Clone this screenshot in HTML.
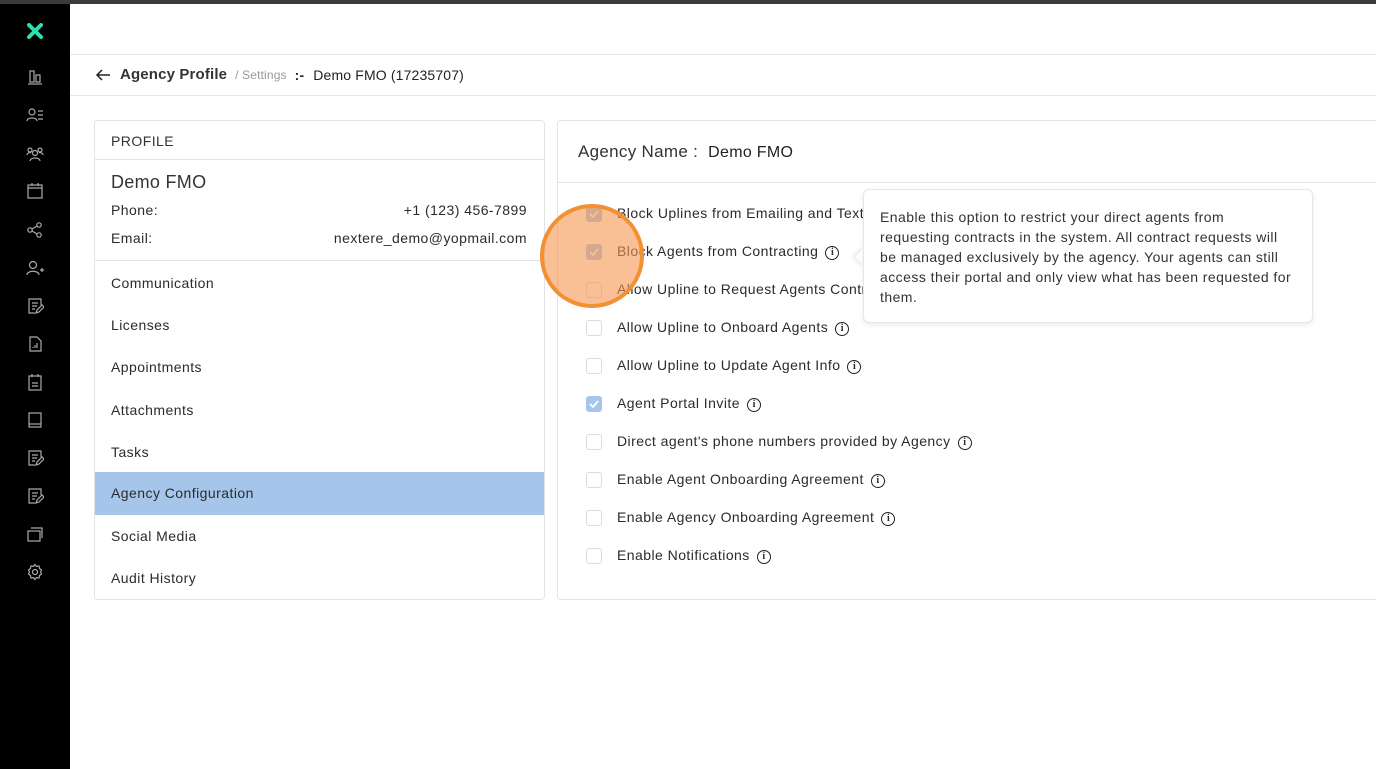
<!DOCTYPE html>
<html><head><style>
*{box-sizing:border-box;margin:0;padding:0}
body{width:1376px;height:769px;background:#fff;font-family:"Liberation Sans",sans-serif;position:relative;overflow:hidden;color:#2b2b2b}
.topbar{position:absolute;left:0;top:0;width:1376px;height:4px;background:#3a3a3a}
.side{position:absolute;left:0;top:4px;width:70px;height:765px;background:#000}
.ic{position:absolute;left:26px;width:18px;height:18px}
.hdr1{position:absolute;left:70px;top:54px;right:0;border-top:1px solid #e6e6e6}
.hdr2{position:absolute;left:70px;top:95px;right:0;border-top:1px solid #e6e6e6}
.bc{position:absolute;left:95px;top:66px;font-size:14px;display:flex;align-items:center;letter-spacing:.15px}
.card{position:absolute;border:1px solid #e3e3e3;border-radius:4px;background:#fff}
.t{position:absolute;font-size:14px;white-space:nowrap;letter-spacing:.45px}
.r{position:absolute;font-size:14px;white-space:nowrap;letter-spacing:.45px;right:849px;text-align:right}
.cb{position:absolute;left:586px;width:16px;height:16px;border:1px solid #dcdcdc;border-radius:3px;background:#fff}
.cb.on{background:#a5c5ea;border-color:#a5c5ea}
.info{display:inline-block;width:14px;height:14px;border:1.4px solid #222;border-radius:50%;font-size:10px;line-height:11px;text-align:center;font-weight:bold;vertical-align:1px;margin-left:7px;font-family:"Liberation Serif",serif;letter-spacing:0}
</style></head><body>
<div class="topbar"></div>
<div class="side">
<svg style="position:absolute;left:27px;top:19px" width="16" height="16" viewBox="0 0 16 16"><path d="M2 2L14 14M14 2L2 14" stroke="#2ee0b0" stroke-width="4" stroke-linecap="round"/></svg>
<svg class="ic" style="top:64px" viewBox="0 0 18 18" fill="none" stroke="#aaa" stroke-width="1.2"><rect x="4" y="3" width="4" height="11"/><rect x="10" y="7" width="4" height="7"/><path d="M2 16h14"/></svg>
<svg class="ic" style="top:102px" viewBox="0 0 18 18" fill="none" stroke="#aaa" stroke-width="1.2"><circle cx="6" cy="6" r="3"/><path d="M1 15c0-4 10-4 10 0M12 5h5M12 9h5M12 13h5"/></svg>
<svg class="ic" style="top:141px" viewBox="0 0 18 18" fill="none" stroke="#aaa" stroke-width="1.2"><circle cx="9" cy="8" r="2.5"/><circle cx="4" cy="5" r="2"/><circle cx="14" cy="5" r="2"/><path d="M4 16c0-4 10-4 10 0M1 10c0-2 3-3 4-2M17 10c0-2-3-3-4-2"/></svg>
<svg class="ic" style="top:178px" viewBox="0 0 18 18" fill="none" stroke="#aaa" stroke-width="1.2"><rect x="2" y="3" width="14" height="13"/><path d="M2 6h14M6 1v3M12 1v3"/></svg>
<svg class="ic" style="top:217px" viewBox="0 0 18 18" fill="none" stroke="#aaa" stroke-width="1.2"><circle cx="4" cy="9" r="2.2"/><circle cx="13" cy="4" r="2.2"/><circle cx="13" cy="14" r="2.2"/><path d="M6 8l5-3M6 10l5 3"/></svg>
<svg class="ic" style="top:255px" viewBox="0 0 18 18" fill="none" stroke="#aaa" stroke-width="1.2"><circle cx="7" cy="6" r="3.5"/><path d="M1 16c0-5 12-5 12 0M14 11h4M16 9v4"/></svg>
<svg class="ic" style="top:293px" viewBox="0 0 18 18" fill="none" stroke="#aaa" stroke-width="1.2"><path d="M15 8V2H3v14h6M6 6h6M6 9h5M6 12h3M10 16l1-3 5-5 2 2-5 5z"/></svg>
<svg class="ic" style="top:331px" viewBox="0 0 18 18" fill="none" stroke="#aaa" stroke-width="1.2"><path d="M4 2h7l4 4v10H4zM7 13v-1M9 13v-3M11 13v-5"/></svg>
<svg class="ic" style="top:369px" viewBox="0 0 18 18" fill="none" stroke="#aaa" stroke-width="1.2"><rect x="3" y="3" width="12" height="14"/><path d="M6 1v3M12 1v3M6 10h6M6 13h6"/></svg>
<svg class="ic" style="top:407px" viewBox="0 0 18 18" fill="none" stroke="#aaa" stroke-width="1.2"><rect x="3" y="2" width="12" height="14"/><path d="M3 13h12"/></svg>
<svg class="ic" style="top:445px" viewBox="0 0 18 18" fill="none" stroke="#aaa" stroke-width="1.2"><path d="M15 8V2H3v14h6M6 6h6M6 9h5M6 12h3M10 16l1-3 5-5 2 2-5 5z"/></svg>
<svg class="ic" style="top:483px" viewBox="0 0 18 18" fill="none" stroke="#aaa" stroke-width="1.2"><path d="M15 8V2H3v14h6M6 6h6M6 9h5M6 12h3M10 16l1-3 5-5 2 2-5 5z"/></svg>
<svg class="ic" style="top:521px" viewBox="0 0 18 18" fill="none" stroke="#aaa" stroke-width="1.2"><rect x="2" y="6" width="12" height="10"/><path d="M5 3h11v10"/></svg>
<svg class="ic" style="top:559px" viewBox="0 0 18 18" fill="none" stroke="#aaa" stroke-width="1.2"><circle cx="9" cy="9" r="2.5"/><path d="M9 1.5l1.5 2 2.5-.5.5 2.5 2 1.5-1 2 1 2-2 1.5-.5 2.5-2.5-.5L9 16.5l-1.5-2-2.5.5-.5-2.5-2-1.5 1-2-1-2 2-1.5.5-2.5 2.5.5z"/></svg>
</div>
<div class="hdr1"></div><div class="hdr2"></div>
<div class="bc"><svg width="16" height="14" viewBox="0 0 16 14" fill="none" stroke="#222" stroke-width="1.5"><path d="M15 7H2M7 2L2 7l5 5"/></svg>
<b style="margin-left:9px;font-size:15px;color:#333">Agency Profile</b><span style="margin-left:8px;font-size:12px;color:#999">/ Settings</span><b style="margin-left:8px">:-</b><span style="margin-left:9px;color:#222">Demo FMO (17235707)</span></div>

<div class="card" style="left:94px;top:120px;width:451px;height:480px">
<div style="position:absolute;left:0;right:0;top:38px;border-top:1px solid #e3e3e3"></div>
<div style="position:absolute;left:0;right:0;top:139px;border-top:1px solid #e3e3e3"></div>
<div style="position:absolute;left:0;right:0;top:351px;height:43px;background:#a5c5ea"></div>
</div>
<div class="t" style="left:111px;top:133px;color:#333">PROFILE</div>
<div class="t" style="left:111px;top:172px;font-size:18px;color:#333;letter-spacing:.3px">Demo FMO</div>
<div class="t" style="left:111px;top:202px">Phone:</div>
<div class="r" style="top:202px">+1 (123) 456-7899</div>
<div class="t" style="left:111px;top:230px">Email:</div>
<div class="r" style="top:230px">nextere_demo@yopmail.com</div>
<div class="t" style="left:111px;top:275px">Communication</div>
<div class="t" style="left:111px;top:317px">Licenses</div>
<div class="t" style="left:111px;top:359px">Appointments</div>
<div class="t" style="left:111px;top:402px">Attachments</div>
<div class="t" style="left:111px;top:444px">Tasks</div>
<div class="t" style="left:111px;top:485px">Agency Configuration</div>
<div class="t" style="left:111px;top:528px">Social Media</div>
<div class="t" style="left:111px;top:570px">Audit History</div>

<div class="card" style="left:557px;top:120px;width:830px;height:480px">
<div style="position:absolute;left:0;right:0;top:61px;border-top:1px solid #e3e3e3"></div></div>
<div class="t" style="left:578px;top:142px;font-size:17px;color:#333;letter-spacing:.3px">Agency Name :&nbsp; <span style="font-size:16px;color:#222">Demo FMO</span></div>

<div class="cb on" style="top:206px"><svg width="14" height="14" viewBox="0 0 14 14"><path d="M3 7l3 3 5-6" stroke="#fff" stroke-width="1.8" fill="none"/></svg></div><div class="t" style="left:617px;top:205px">Block Uplines from Emailing and Texting</div>
<div class="cb on" style="top:244px"><svg width="14" height="14" viewBox="0 0 14 14"><path d="M3 7l3 3 5-6" stroke="#fff" stroke-width="1.8" fill="none"/></svg></div><div class="t" style="left:617px;top:243px">Block Agents from Contracting<span class="info">i</span></div>
<div class="cb" style="top:282px"></div><div class="t" style="left:617px;top:281px">Allow Upline to Request Agents Contracts</div>
<div class="cb" style="top:320px"></div><div class="t" style="left:617px;top:319px">Allow Upline to Onboard Agents<span class="info">i</span></div>
<div class="cb" style="top:358px"></div><div class="t" style="left:617px;top:357px">Allow Upline to Update Agent Info<span class="info">i</span></div>
<div class="cb on" style="top:396px"><svg width="14" height="14" viewBox="0 0 14 14"><path d="M3 7l3 3 5-6" stroke="#fff" stroke-width="1.8" fill="none"/></svg></div><div class="t" style="left:617px;top:395px">Agent Portal Invite<span class="info">i</span></div>
<div class="cb" style="top:434px"></div><div class="t" style="left:617px;top:433px">Direct agent's phone numbers provided by Agency<span class="info">i</span></div>
<div class="cb" style="top:472px"></div><div class="t" style="left:617px;top:471px">Enable Agent Onboarding Agreement<span class="info">i</span></div>
<div class="cb" style="top:510px"></div><div class="t" style="left:617px;top:509px">Enable Agency Onboarding Agreement<span class="info">i</span></div>
<div class="cb" style="top:548px"></div><div class="t" style="left:617px;top:547px">Enable Notifications<span class="info">i</span></div>

<div style="position:absolute;left:855px;top:248px;width:0;height:0;border-top:9px solid transparent;border-bottom:9px solid transparent;border-right:9px solid #fff;filter:drop-shadow(-2px 0 2px rgba(0,0,0,.12))"></div>
<div style="position:absolute;left:863px;top:189px;width:450px;height:134px;background:#fff;border:1px solid #e6e6e6;border-radius:6px;box-shadow:0 2px 6px rgba(0,0,0,.08);padding:17px 16px;font-size:14px;line-height:20px;color:#333;letter-spacing:.45px">Enable this option to restrict your direct agents from requesting contracts in the system. All contract requests will be managed exclusively by the agency. Your agents can still access their portal and only view what has been requested for them.</div>

<div style="position:absolute;left:540px;top:204px;width:104px;height:104px;border-radius:50%;background:rgba(245,150,80,.6);border:4px solid #f39034"></div>
</body></html>
